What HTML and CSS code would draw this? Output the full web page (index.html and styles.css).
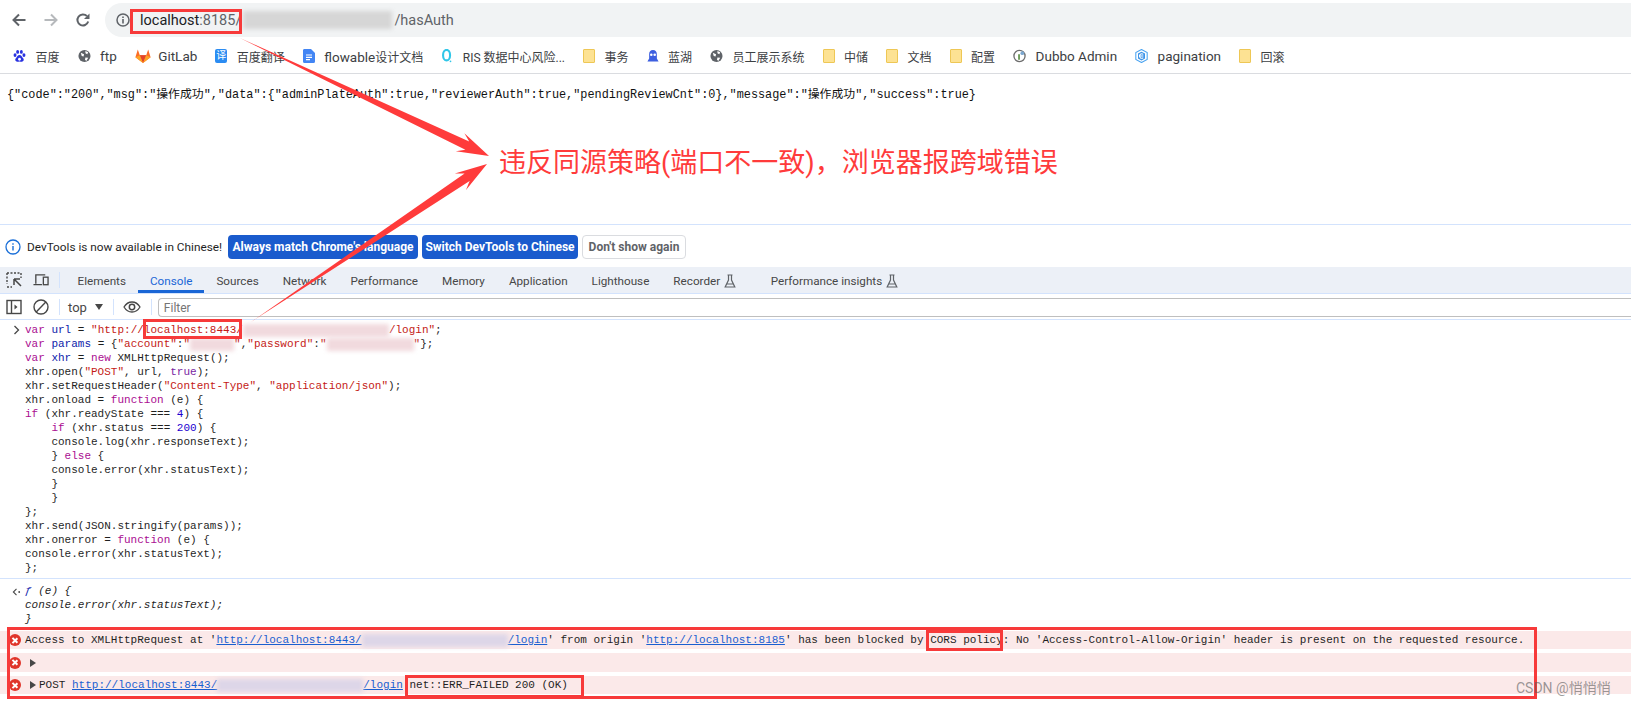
FILE: index.html
```html
<!DOCTYPE html>
<html lang="zh-CN">
<head>
    <meta charset="UTF-8">
    <title>localhost:8185/hasAuth</title>
    <link rel="stylesheet" href="styles.css">
</head>
<body>
    <!--Barra del navegador-->
    <header class="nav-bar">
        <div class="nav-buttons">
            <svg class="nav-icon" viewBox="0 0 16 16"><path d="M14.5 8H2.5M8 2.5 2.5 8 8 13.5" fill="none" stroke="#5f6368" stroke-width="2"/></svg>
            <svg class="nav-icon" viewBox="0 0 16 16"><path d="M1.5 8h12M8 2.5 13.5 8 8 13.5" fill="none" stroke="#b6b9bc" stroke-width="2"/></svg>
            <svg class="nav-icon" viewBox="0 0 16 16"><path d="M13.2 9.5A5.5 5.5 0 1 1 12 4.2" fill="none" stroke="#5f6368" stroke-width="2"/><path d="M14.5 1.5v5.5H9z" fill="#5f6368"/></svg>
        </div>
        <div class="address">
            <svg class="address-info" viewBox="0 0 14 14"><circle cx="7" cy="7" r="6" fill="none" stroke="#5f6368" stroke-width="1.5"/><path d="M7 6v4.5M7 3.4v1.5" stroke="#5f6368" stroke-width="1.6"/></svg>
            <span class="address-host">localhost</span><span class="address-rest">:8185/</span><span class="blur blur-gray w-address"></span><span class="address-rest">/hasAuth</span>
        </div>
    </header>

    <nav class="bookmarks">
        <a class="bookmark">
            <svg class="bm-icon" viewBox="0 0 14 14"><g fill="#2932e1"><ellipse cx="2.2" cy="6" rx="1.6" ry="2"/><ellipse cx="5" cy="2.6" rx="1.6" ry="2.1"/><ellipse cx="9" cy="2.6" rx="1.6" ry="2.1"/><ellipse cx="11.8" cy="6" rx="1.6" ry="2"/><path d="M7 6c2 0 2.500 2 4 3.500 1.200 1.500.5 3.700-1.500 3.700-1 0-1.500-.4-2.500-.4s-1.500.4-2.500.4C2.500 13.200 1.800 11 3 9.500 4.500 8 5 6 7 6z"/></g><circle cx="7" cy="10.500" r="1.500" fill="#fff"/></svg>
            百度
        </a>
        <a class="bookmark">
            <svg class="bm-icon" viewBox="0 0 14 14"><circle cx="7" cy="7" r="6.500" fill="#5f6368"/><path d="M3 3.500 6.500 5 6 7.500 4 7zM8 8.500l3 .5-2 3.500-1.500-1.500zM8 1.500l3 1.500-1 2-2-1z" fill="#fff"/></svg>
            <span class="bm-latin">ftp</span>
        </a>
        <a class="bookmark">
            <svg class="bm-icon bm-wide" viewBox="0 0 16 14"><path d="M8 14 .4 8.300 2.800.5l2 5.800h6.400l2-5.800 2.400 7.800z" fill="#fc6d26"/><path d="M8 14 4.800 6.300h6.400z" fill="#e24329"/><path d="M.4 8.300 8 14 4.800 6.300zM15.600 8.300 8 14l3.200-7.700z" fill="#fca326"/></svg>
            <span class="bm-latin">GitLab</span>
        </a>
        <a class="bookmark">
            <span class="bm-translate">译</span>
            百度翻译
        </a>
        <a class="bookmark">
            <svg class="bm-icon bm-narrow" viewBox="0 0 12 14"><path d="M2 0h6l4 4v8.500a1.500 1.500 0 0 1-1.500 1.500h-9A1.500 1.500 0 0 1 0 12.500v-11A1.500 1.500 0 0 1 2 0z" fill="#4285f4"/><path d="M3 6h6M3 8.300h6M3 10.600h4" stroke="#fff" stroke-width="1.200"/></svg>
            <span><span class="bm-latin">flowable</span>设计文档</span>
        </a>
        <a class="bookmark">
            <svg class="bm-icon bm-narrow" viewBox="0 0 12 16"><ellipse cx="5.500" cy="7" rx="4" ry="6" fill="none" stroke="#2fc6e8" stroke-width="2.400"/><circle cx="10" cy="14" r="1" fill="#2fc6e8"/></svg>
            RIS 数据中心风险...
        </a>
        <a class="bookmark">
            <span class="folder"></span>
            事务
        </a>
        <a class="bookmark">
            <svg class="bm-icon bm-narrow" viewBox="0 0 14 16"><path d="M7 1c3 0 4.500 2 4.500 5v5l2 3.500H.5l2-3.500V6C2.500 3 4 1 7 1z" fill="#3d5fe0"/><circle cx="5" cy="6.500" r="1.500" fill="#fff"/><circle cx="9" cy="6.500" r="1.500" fill="#fff"/></svg>
            蓝湖
        </a>
        <a class="bookmark">
            <svg class="bm-icon" viewBox="0 0 14 14"><circle cx="7" cy="7" r="6.500" fill="#5f6368"/><path d="M3 3.500 6.500 5 6 7.500 4 7zM8 8.500l3 .5-2 3.500-1.500-1.500zM8 1.500l3 1.500-1 2-2-1z" fill="#fff"/></svg>
            员工展示系统
        </a>
        <a class="bookmark">
            <span class="folder"></span>
            中储
        </a>
        <a class="bookmark">
            <span class="folder"></span>
            文档
        </a>
        <a class="bookmark">
            <span class="folder"></span>
            配置
        </a>
        <a class="bookmark">
            <svg class="bm-icon" viewBox="0 0 14 14"><circle cx="7" cy="7" r="6" fill="none" stroke="#6d6d6d" stroke-width="1.400"/><path d="M5.500 5h2v6h-2z" fill="#6a9a55"/><circle cx="10" cy="4" r="2" fill="#7ba7d0"/></svg>
            <span class="bm-latin">Dubbo Admin</span>
        </a>
        <a class="bookmark">
            <svg class="bm-icon" viewBox="0 0 14 16"><path d="M7 .5 13.500 4v8L7 15.500.5 12V4z" fill="#fff" stroke="#4aa3f0" stroke-width="1.200"/><path d="M7 3l4 2.200v5.600L7 13l-4-2.200V5.200z" fill="#3b93e8"/><path d="M4.800 8h4.400M9 6.200A2.500 2.500 0 1 0 9 9.800" fill="none" stroke="#fff" stroke-width="1.200"/></svg>
            <span class="bm-latin">pagination</span>
        </a>
        <a class="bookmark">
            <span class="folder"></span>
            回滚
        </a>
    </nav>

    <!--Respuesta JSON-->
    <main class="page">
        <pre class="json">{"code":"200","msg":"操作成功","data":{"adminPlateAuth":true,"reviewerAuth":true,"pendingReviewCnt":0},"message":"操作成功","success":true}</pre>
    </main>

    <section class="devtools">
        <div class="infobar">
            <svg class="infobar-icon" viewBox="0 0 16 16"><circle cx="8" cy="8" r="7" fill="none" stroke="#1a6fd8" stroke-width="1.300"/><path d="M8 7v4.500M8 4.200v1.500" stroke="#1a6fd8" stroke-width="1.400"/></svg>
            <span class="infobar-text">DevTools is now available in Chinese!</span>
            <button class="btn btn-primary btn-match">Always match Chrome's language</button>
            <button class="btn btn-primary btn-switch">Switch DevTools to Chinese</button>
            <button class="btn btn-plain">Don't show again</button>
        </div>

        <div class="tabs">
            <div class="tool-icons">
                <svg class="tool-icon" viewBox="0 0 16 16"><path d="M1 1h14M1 1v11M15 1v5M1 15h5" fill="none" stroke="#474747" stroke-width="1.400" stroke-dasharray="2 1.500"/><path d="M8 7h6M8 7v6M8 7l7 7" fill="none" stroke="#474747" stroke-width="1.500"/></svg>
                <svg class="tool-icon" viewBox="0 0 17 16"><path d="M3 12V2.500h10M.5 13h9" fill="none" stroke="#474747" stroke-width="1.400"/><rect x="11" y="5" width="5" height="8" fill="none" stroke="#474747" stroke-width="1.400"/></svg>
            </div>
            <div class="tabs-sep"></div>
            <a class="tab">Elements</a>
            <a class="tab tab-active">Console</a>
            <a class="tab">Sources</a>
            <a class="tab">Network</a>
            <a class="tab">Performance</a>
            <a class="tab">Memory</a>
            <a class="tab">Application</a>
            <a class="tab">Lighthouse</a>
            <a class="tab tab-recorder">Recorder
                <svg class="flask" viewBox="0 0 12 14"><path d="M3.500 1h5M4.500 1v5L1.200 13h9.600L7.500 6V1M3 10h6" fill="none" stroke="#5f6368" stroke-width="1.200"/></svg>
            </a>
            <a class="tab">Performance insights
                <svg class="flask" viewBox="0 0 12 14"><path d="M3.500 1h5M4.500 1v5L1.200 13h9.600L7.500 6V1M3 10h6" fill="none" stroke="#5f6368" stroke-width="1.200"/></svg>
            </a>
        </div>

        <div class="toolbar">
            <svg class="tool-icon" viewBox="0 0 16 16"><rect x="1" y="1.500" width="14" height="13" fill="none" stroke="#474747" stroke-width="1.400"/><path d="M5.500 1.500v13" stroke="#474747" stroke-width="1.400"/><path d="M8.500 5.500 11.500 8l-3 2.500z" fill="#474747"/></svg>
            <svg class="tool-icon tool-block" viewBox="0 0 16 16"><circle cx="8" cy="8" r="7" fill="none" stroke="#474747" stroke-width="1.400"/><path d="M3.200 13 12.800 3" stroke="#474747" stroke-width="1.400"/></svg>
            <div class="toolbar-sep"></div>
            <span class="context">top</span>
            <span class="context-caret"></span>
            <div class="toolbar-sep"></div>
            <svg class="tool-eye" viewBox="0 0 18 12"><path d="M1 6c2-3.300 4.700-5 8-5s6 1.700 8 5c-2 3.300-4.700 5-8 5S3 9.300 1 6z" fill="none" stroke="#474747" stroke-width="1.300"/><circle cx="9" cy="6" r="2.700" fill="none" stroke="#474747" stroke-width="1.500"/></svg>
            <div class="toolbar-sep"></div>
            <div class="filter">Filter</div>
        </div>

        <div class="console">
            <div class="entry entry-input">
                <svg class="prompt" viewBox="0 0 8 10"><path d="M2 1l4 4-4 4" fill="none" stroke="#474747" stroke-width="1.300"/></svg>
                <div class="line"><span class="kw">var</span> <span class="def">url</span> = <span class="str">"http://localhost:8443/<span class="blur blur-pink w-url"></span>/login"</span>;</div>
                <div class="line"><span class="kw">var</span> <span class="def">params</span> = {<span class="str">"account"</span>:<span class="str">"<span class="blur blur-pink w-account"></span>"</span>,<span class="str">"password"</span>:<span class="str">"<span class="blur blur-pink w-password"></span>"</span>};</div>
                <div class="line"><span class="kw">var</span> <span class="def">xhr</span> = <span class="kw">new</span> XMLHttpRequest();</div>
                <div class="line">xhr.open(<span class="str">"POST"</span>, url, <span class="lit">true</span>);</div>
                <div class="line">xhr.setRequestHeader(<span class="str">"Content-Type"</span>, <span class="str">"application/json"</span>);</div>
                <div class="line">xhr.onload = <span class="kw">function</span> (e) {</div>
                <div class="line"><span class="kw">if</span> (xhr.readyState === <span class="num">4</span>) {</div>
                <div class="line">    <span class="kw">if</span> (xhr.status === <span class="num">200</span>) {</div>
                <div class="line">    console.log(xhr.responseText);</div>
                <div class="line">    } <span class="kw">else</span> {</div>
                <div class="line">    console.error(xhr.statusText);</div>
                <div class="line">    }</div>
                <div class="line">    }</div>
                <div class="line">};</div>
                <div class="line">xhr.send(JSON.stringify(params));</div>
                <div class="line">xhr.onerror = <span class="kw">function</span> (e) {</div>
                <div class="line">console.error(xhr.statusText);</div>
                <div class="line">};</div>
            </div>
            <div class="entry entry-output">
                <svg class="prompt" viewBox="0 0 10 10"><path d="M5 1.500 1.500 5 5 8.500" fill="none" stroke="#474747" stroke-width="1.200"/><circle cx="8" cy="5" r="1" fill="#474747"/></svg>
                <div class="line line-italic"><span class="def">ƒ</span> (e) {</div>
                <div class="line line-italic">console.error(xhr.statusText);</div>
                <div class="line line-italic">}</div>
            </div>
            <div class="error-row">
                <span class="error-icon"></span>
                <span class="error-text">Access to XMLHttpRequest at '<a class="link">http://localhost:8443/<span class="blur blur-lilac w-link"></span>/login</a>' from origin '<a class="link">http://localhost:8185</a>' has been blocked by CORS policy: No 'Access-Control-Allow-Origin' header is present on the requested resource.</span>
            </div>
            <div class="error-row error-row-tall">
                <span class="error-icon"></span>
                <span class="caret"></span>
            </div>
            <div class="error-row">
                <span class="error-icon"></span>
                <span class="caret"></span>
                <span class="error-text">POST <a class="link">http://localhost:8443/<span class="blur blur-lilac w-post"></span>/login</a> net::ERR_FAILED 200 (OK)</span>
            </div>
        </div>
    </section>

    <!--Anotaciones encima de la captura-->
    <svg class="marks" viewBox="0 0 1631 704">
        <g fill="#ff3b3b">
            <polygon points="240,38 469.200,141.600 464.400,133.300 489,156 455.800,151.300 465.400,149.800"/>
            <polygon points="251,322 464.600,173.600 454.800,173.500 487,164 466,190.100 469.600,181"/>
        </g>
        <g fill="none" stroke="#f73a3a" stroke-width="3">
            <rect x="131.500" y="10.500" width="109" height="22"/>
            <rect x="144.500" y="320.500" width="96" height="17"/>
            <rect x="8.500" y="628.500" width="1527" height="69"/>
            <rect x="927.500" y="631.500" width="74" height="18"/>
            <rect x="406.500" y="676.500" width="176" height="20"/>
        </g>
    </svg>
    <p class="note">违反同源策略(端口不一致)，浏览器报跨域错误</p>
    <span class="watermark">CSDN @悄悄悄</span>
</body>
</html>
```
FILE: styles.css
```css
html{
    box-sizing: border-box;
    font-family: Roboto, "Noto Sans CJK SC", sans-serif;
    font-size: 12px;
}
*,
*::before,
*::after{
    box-sizing: inherit;
}

body{
    margin: 0;
    width: 1631px;
    height: 704px;
    position: relative;
    overflow: hidden;
    background-color: #fff;
    color: #3c4043;
}

/* barra del navegador */
.nav-bar{
    display: flex;
    height: 37px;
    padding-top: 3px;
}
.nav-buttons{
    display: flex;
    align-items: center;
    gap: 16px;
    width: 105px;
    padding-left: 11px;
}
.nav-icon{
    width: 16px;
    height: 16px;
}
.address{
    flex-grow: 1;
    display: flex;
    align-items: center;
    padding-left: 11px;
    background-color: #f1f3f4;
    border-radius: 17px 0 0 17px;
    font-size: 14.500px;
}
.address-info{
    width: 14px;
    height: 14px;
    margin-right: 10px;
}
.address-host{
    color: #202124;
}
.address-rest{
    color: #5f6368;
}

/* marcadores */
.bookmarks{
    display: flex;
    align-items: center;
    gap: 18px;
    height: 37px;
    padding: 2px 0 0 13px;
    border-bottom: 1px solid #dadce0;
}
.bookmark{
    display: flex;
    align-items: center;
    gap: 9.500px;
    color: #3c4043;
    white-space: nowrap;
}
.bm-latin{
    font-size: 13.500px;
}
.bm-icon{
    width: 13px;
    height: 14px;
    flex-shrink: 0;
}
.bm-wide{
    width: 16px;
    margin-right: -2px;
}
.bm-narrow{
    width: 12px;
}
.bm-translate{
    width: 12px;
    height: 14px;
    background-color: #2b8cf2;
    border-radius: 2px;
    color: #fff;
    font-size: 10px;
    line-height: 14px;
    text-align: center;
}
.folder{
    width: 12px;
    height: 14px;
    background-color: #fde293;
    border: 1px solid #eec755;
    border-radius: 1px;
}

/* respuesta */
.page{
    height: 150px;
    padding: 14px 7px 0;
}
.json{
    margin: 0;
    font-family: "Liberation Mono", "Noto Sans CJK SC", monospace;
    font-size: 11.850px;
    line-height: 14px;
    color: #111;
}

/* blur de datos ocultos */
.blur{
    display: inline-block;
    height: 13px;
    vertical-align: middle;
    filter: blur(2px);
}
.blur-gray{
    height: 18px;
    background-color: #d6d6d6;
}
.blur-pink{
    background-color: #f1dade;
}
.blur-lilac{
    background-color: #ddd6e8;
}
.w-address{
    width: 149px;
    margin: 0 2px;
}
.w-url{
    width: 146px;
}
.w-account{
    width: 44px;
}
.w-password{
    width: 87px;
}
.w-link{
    width: 146px;
}
.w-post{
    width: 146px;
}

/* devtools */
.devtools{
    border-top: 1px solid #d3e3fd;
}
.infobar{
    display: flex;
    align-items: center;
    height: 42px;
    padding: 1px 0 0 5px;
}
.infobar-icon{
    width: 16px;
    height: 16px;
    margin-right: 6px;
}
.infobar-text{
    width: 201px;
    font-size: 11.800px;
    color: #1f1f1f;
}
.btn{
    height: 24px;
    padding: 0;
    margin-right: 4px;
    border-radius: 4px;
    font-family: inherit;
    font-size: 12px;
    font-weight: 700;
}
.btn-primary{
    border: 0;
    background-color: #1a5bcd;
    color: #fff;
}
.btn-match{
    width: 190px;
}
.btn-switch{
    width: 156px;
}
.btn-plain{
    width: 104px;
    border: 1px solid #dadce0;
    background-color: #fff;
    color: #5f6368;
}

.tabs{
    display: flex;
    align-items: stretch;
    height: 27px;
    padding-left: 6px;
    background-color: #ecf0f7;
    border-bottom: 1px solid #d3e3fd;
    color: #474747;
}
.tool-icons{
    display: flex;
    align-items: center;
    gap: 11px;
}
.tool-icon{
    width: 16px;
    height: 16px;
    flex-shrink: 0;
}
.tabs-sep{
    align-self: center;
    width: 1px;
    height: 16px;
    margin: 0 5.500px 0 10px;
    background-color: #d3e3fd;
}
.tab{
    display: flex;
    align-items: center;
    gap: 4px;
    padding: 1px 12px 0;
    font-size: 11.700px;
    white-space: nowrap;
}
.tab-active{
    color: #1a66d6;
    box-shadow: inset 0 -3px 0 #1a66d6;
}
.tab-recorder{
    padding-right: 22.500px;
}
.flask{
    width: 12px;
    height: 14px;
}

.toolbar{
    display: flex;
    align-items: center;
    height: 26px;
    padding-left: 6px;
    border-bottom: 1px solid #d3e3fd;
    color: #474747;
}
.tool-block{
    margin-left: 11px;
}
.toolbar-sep{
    width: 1px;
    height: 16px;
    margin: 0 6px 0 10px;
    background-color: #d3e3fd;
}
.context{
    margin-left: 2px;
    padding-top: 2px;
    font-size: 13px;
}
.context-caret{
    width: 0;
    height: 0;
    margin-left: 8px;
    border-left: 4px solid transparent;
    border-right: 4px solid transparent;
    border-top: 6px solid #474747;
}
.tool-eye{
    width: 18px;
    height: 12px;
    margin-left: 3px;
}
.filter{
    flex-grow: 1;
    height: 19px;
    margin-top: 2px;
    padding-left: 5px;
    border: 1px solid #bfbfbf;
    border-right: 0;
    border-radius: 4px 0 0 4px;
    color: #757575;
    line-height: 19px;
}

/* consola */
.console{
    font-family: "Liberation Mono", monospace;
    font-size: 11px;
    line-height: 14px;
    color: #1f1f1f;
}
.entry{
    position: relative;
    padding-left: 25px;
}
.entry-input{
    height: 259px;
    padding-top: 3px;
    border-bottom: 1px solid #d3e3fd;
}
.entry-output{
    height: 52px;
    padding-top: 5px;
}
.prompt{
    position: absolute;
    left: 12px;
    top: 5px;
    width: 9px;
    height: 10px;
}
.entry-output .prompt{
    top: 8px;
}
.line{
    height: 14px;
    white-space: pre;
}
.line-italic{
    font-style: italic;
}
.kw{
    color: #aa0d91;
}
.def{
    color: #0d22aa;
}
.str{
    color: #c41a16;
}
.num{
    color: #1c00cf;
}
.lit{
    color: #7a1fa2;
}

.error-row{
    display: flex;
    align-items: center;
    height: 18px;
    margin-bottom: 4px;
    padding-left: 9px;
    background-color: #fbe9e9;
    white-space: pre;
}
.error-row-tall{
    height: 19px;
}
.error-icon{
    position: relative;
    width: 12px;
    height: 12px;
    margin-right: 4px;
    border-radius: 50%;
    background-color: #e0352b;
    flex-shrink: 0;
}
.error-icon::before,
.error-icon::after{
    content: "";
    position: absolute;
    left: 5.250px;
    top: 2.500px;
    width: 1.500px;
    height: 7px;
    background-color: #fff;
    transform: rotate(45deg);
}
.error-icon::after{
    transform: rotate(-45deg);
}
.caret{
    width: 0;
    height: 0;
    margin: 0 3px 0 5px;
    border-top: 4px solid transparent;
    border-bottom: 4px solid transparent;
    border-left: 6px solid #474747;
}
.link{
    color: #1a5fd0;
    text-decoration: underline;
}

/* anotaciones */
.marks{
    position: absolute;
    left: 0;
    top: 0;
    width: 1631px;
    height: 704px;
    pointer-events: none;
}
.note{
    position: absolute;
    left: 499px;
    top: 145px;
    margin: 0;
    font-size: 27px;
    line-height: 36px;
    color: #ff3b3b;
    white-space: nowrap;
}
.watermark{
    position: absolute;
    left: 1516px;
    top: 679px;
    font-size: 14px;
    line-height: 18px;
    color: rgba(90, 90, 90, .6);
    white-space: nowrap;
}
```
